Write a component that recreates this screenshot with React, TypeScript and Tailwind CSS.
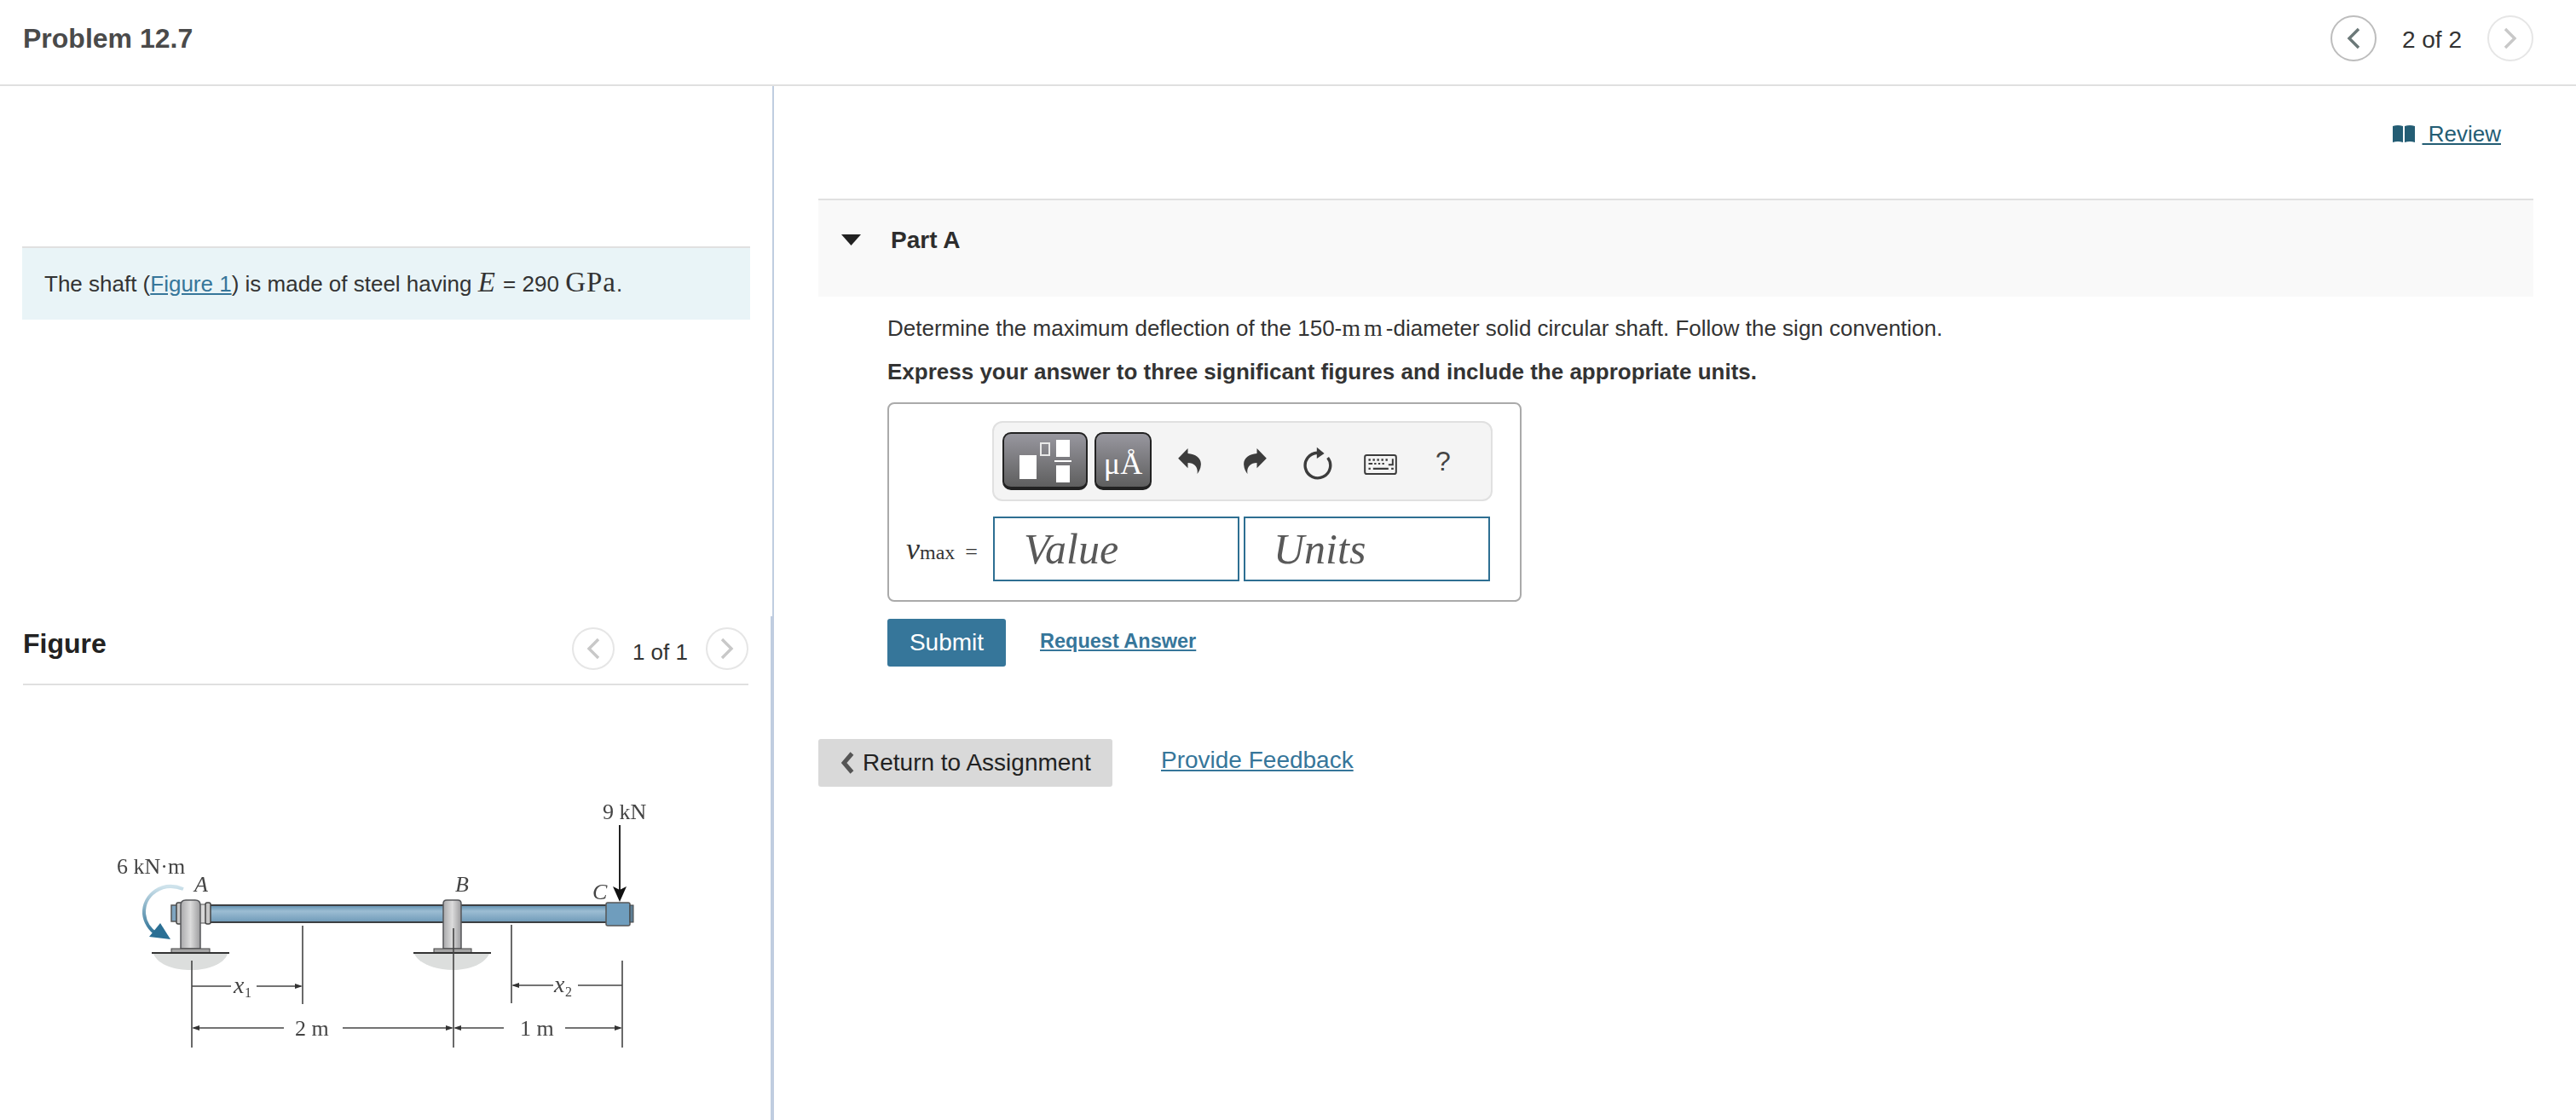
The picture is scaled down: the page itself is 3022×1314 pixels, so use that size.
import React from "react";

const NavButton = ({ dir, active, size }: { dir: "prev" | "next"; active?: boolean; size: string }) => (
  <button className={`${size} flex items-center justify-center rounded-full border-2 bg-white ${active ? "border-[#bdbdbd]" : "border-[#e6e6e6]"}`}>
    <svg width="16" height="26" viewBox="0 0 16 26" fill="none" stroke={active ? "#6b7878" : "#c8c8c8"} strokeWidth="3.4">
      {dir === "prev" ? <path d="M14 2 L3 13 L14 24" /> : <path d="M2 2 L13 13 L2 24" />}
    </svg>
  </button>
);

const Shaft = () => (
  <svg viewBox="0 880 900 434" className="block h-[434px] w-[900px] blur-[0.6px]">
    <defs>
      <linearGradient id="shaft" x1="0" y1="0" x2="0" y2="1">
        <stop offset="0" stopColor="#5f8fb0" />
        <stop offset="0.35" stopColor="#9cbdd3" />
        <stop offset="1" stopColor="#6f9ab8" />
      </linearGradient>
      <linearGradient id="post" x1="0" y1="0" x2="1" y2="0">
        <stop offset="0" stopColor="#a9a9ab" />
        <stop offset="0.5" stopColor="#dcdcdc" />
        <stop offset="1" stopColor="#9b9b9d" />
      </linearGradient>
      <linearGradient id="moment" x1="0" y1="0" x2="0" y2="1">
        <stop offset="0" stopColor="#cfe3ec" />
        <stop offset="1" stopColor="#2a6f94" />
      </linearGradient>
    </defs>

    {/* ground */}
    <path d="M180 1119 H267 C262 1133 240 1138 224 1138 C206 1138 186 1133 180 1119 Z" fill="#dcdedd" />
    <path d="M486 1119 H574 C568 1132 548 1138 532 1138 C514 1138 492 1132 486 1119 Z" fill="#dcdedd" />

    {/* shaft */}
    <rect x="245" y="1062" width="470" height="20" fill="url(#shaft)" stroke="#3c3f42" strokeWidth="2" />

    {/* support A */}
    <rect x="201" y="1062" width="12" height="19" fill="#7fa5c0" stroke="#555" strokeWidth="1.5" />
    <rect x="207" y="1059" width="7" height="25" rx="2" fill="#c8c8c8" stroke="#444" strokeWidth="1.5" />
    <rect x="234" y="1061" width="8" height="22" fill="#d8d8d8" stroke="#555" strokeWidth="1" />
    <rect x="241" y="1059" width="6" height="25" rx="2" fill="#c8c8c8" stroke="#444" strokeWidth="1.5" />
    <path d="M212 1113 V1062 Q212 1056 218 1056 H229 Q235 1056 235 1062 V1113 Z" fill="url(#post)" stroke="#55575a" strokeWidth="1.5" />
    <rect x="201" y="1113" width="45" height="5" fill="#a5a5a5" stroke="#444" strokeWidth="1" />
    <rect x="178" y="1117" width="91" height="2" fill="#333" />

    {/* support B */}
    <path d="M520 1113 V1060 Q520 1056 524 1056 H537 Q541 1056 541 1060 V1113 Z" fill="url(#post)" stroke="#55575a" strokeWidth="1.5" />
    <rect x="509" y="1113" width="44" height="5" fill="#a5a5a5" stroke="#444" strokeWidth="1" />
    <rect x="485" y="1117" width="91" height="2" fill="#333" />

    {/* end collar */}
    <rect x="711" y="1059" width="28" height="27" rx="2" fill="#6f9dbd" stroke="#555" strokeWidth="1.5" />
    <rect x="739" y="1062" width="4" height="20" fill="#5f7f95" stroke="#444" strokeWidth="1" />

    {/* moment */}
    <path d="M215 1043 C190 1033 168 1050 169 1072 C170 1082 176 1091 184 1096" fill="none" stroke="url(#moment)" strokeWidth="4" />
    <path d="M200 1102 L175 1099 L188 1083 Z" fill="#2a6f94" />

    {/* load */}
    <path d="M727 968 V1045" stroke="#222" strokeWidth="2" />
    <path d="M719 1040 L727 1058 L735 1040 L727 1044 Z" fill="#111" />

    {/* dimension lines */}
    <g stroke="#444" strokeWidth="1.6" fill="none">
      <path d="M225 1127 V1229" />
      <path d="M355 1086 V1178" />
      <path d="M532 1089 V1229" />
      <path d="M600 1085 V1177" />
      <path d="M730 1127 V1229" />
      <path d="M225 1157 H271" />
      <path d="M301 1157 H353" />
      <path d="M602 1156 H649" />
      <path d="M678 1156 H730" />
      <path d="M227 1206 H333" />
      <path d="M402 1206 H530" />
      <path d="M534 1206 H591" />
      <path d="M663 1206 H728" />
    </g>
    <g fill="#333">
      <path d="M355 1157 L346 1154 V1160 Z" />
      <path d="M600 1156 L609 1153 V1159 Z" />
      <path d="M225 1206 L234 1203 V1209 Z" />
      <path d="M532 1206 L523 1203 V1209 Z" />
      <path d="M532 1206 L541 1203 V1209 Z" />
      <path d="M730 1206 L721 1203 V1209 Z" />
    </g>

    <g fontFamily="'Liberation Serif', serif" fill="#444" fontSize="26">
      <text x="137" y="1025">6 kN·m</text>
      <text x="707" y="961">9 kN</text>
      <text x="346" y="1215">2 m</text>
      <text x="610" y="1215">1 m</text>
      <g fontStyle="italic" fontSize="26">
        <text x="228" y="1046">A</text>
        <text x="534" y="1046">B</text>
        <text x="695" y="1055">C</text>
        <text x="274" y="1165" fontSize="28">x</text>
        <text x="650" y="1164" fontSize="28">x</text>
      </g>
      <text x="287" y="1170" fontSize="16">1</text>
      <text x="663" y="1169" fontSize="16">2</text>
    </g>
  </svg>
);

const MathToolbar = () => (
  <div className="flex h-[94px] w-[587px] items-center rounded-[12px] border-2 border-[#e0e0e0] bg-[#f4f4f4] pl-[10px]">
    <button className="flex h-[68px] w-[100px] items-center justify-center rounded-[10px] border-2 border-b-4 border-[#222] bg-gradient-to-b from-[#98979f] to-[#5f5f5f]">
      <svg width="64" height="52" viewBox="0 0 64 52">
        <rect x="2" y="20" width="20" height="28" fill="#fff" />
        <rect x="27" y="6" width="10" height="14" fill="none" stroke="#e8e8e8" strokeWidth="2" />
        <rect x="45" y="2" width="16" height="20" fill="#fff" />
        <rect x="43" y="26" width="20" height="2" fill="#fff" />
        <rect x="45" y="32" width="16" height="20" fill="#fff" />
      </svg>
    </button>
    <button className="ml-2 flex h-[68px] w-[67px] items-center justify-center rounded-[10px] border-2 border-b-4 border-[#222] bg-gradient-to-b from-[#98979f] to-[#5f5f5f] font-['Liberation_Serif',serif] text-[36px] leading-none text-white">
      <span className="pt-2">μÅ</span>
    </button>
    <div className="flex w-[88px] justify-center">
      <svg width="27" height="30" viewBox="63 77 80 90" fill="#3c3c3c">
        <path d="M63 112 L97 77 L97 95 C125 97 145 112 143 135 C142 150 136 160 130 167 C134 145 122 128 97 128 L97 147 Z" />
      </svg>
    </div>
    <div className="flex w-[66px] justify-center">
      <svg width="27" height="30" viewBox="63 77 80 90" fill="#3c3c3c">
        <path transform="matrix(-1 0 0 1 206 0)" d="M63 112 L97 77 L97 95 C125 97 145 112 143 135 C142 150 136 160 130 167 C134 145 122 128 97 128 L97 147 Z" />
      </svg>
    </div>
    <div className="flex w-[80px] justify-center pt-1">
      <svg width="35" height="39" viewBox="500 65 104 115" fill="none">
        <path d="M588 103 A44 44 0 1 1 552 86" stroke="#3c3c3c" strokeWidth="10" />
        <path d="M550 67 L576 88 L550 106 Z" fill="#3c3c3c" />
      </svg>
    </div>
    <div className="flex w-[68px] justify-center pt-2">
      <svg width="39" height="24" viewBox="716 102 116 72" fill="#3c3c3c">
        <rect x="719" y="105" width="110" height="66" rx="7" fill="none" stroke="#3c3c3c" strokeWidth="6" />
        <path d="M732 118h7v7h-7zM747 118h7v7h-7zM762 118h7v7h-7zM777 118h7v7h-7zM792 118h7v7h-7zM814 118h6v24h-18v-6h12z" />
        <path d="M732 132h14v6h-14zM752 132h7v6h-7zM766 132h7v6h-7zM780 132h7v6h-7z" />
        <path d="M732 149h7v7h-7zM748 149h54v7h-54zM812 149h8v7h-8z" />
      </svg>
    </div>
    <div className="flex w-[80px] justify-center font-['Liberation_Sans',sans-serif] text-[32px] leading-none text-[#444]">?</div>
  </div>
);

export default function App() {
  return (
    <div className="h-[1314px] w-[3022px] overflow-hidden bg-white font-['Liberation_Sans',Arial,sans-serif] text-[26px] text-[#333]">
      {/* Top bar */}
      <header className="flex h-[101px] items-center justify-between border-b-2 border-[#e0e0e0] pl-[27px] pr-[50px]">
        <h1 className="mb-[10px] text-[32px] font-bold text-[#4a4a4a]">Problem 12.7</h1>
        <div className="mb-[10px] flex items-center">
          <NavButton dir="prev" active size="h-[54px] w-[54px]" />
          <span className="mx-[30px] mt-1 text-[28px]">2 of 2</span>
          <NavButton dir="next" size="h-[54px] w-[54px]" />
        </div>
      </header>

      <div className="flex">
        {/* Left column */}
        <aside className="flex w-[908px] flex-col">
          <div className="h-[622px] border-r-2 border-[#c0cde0] pl-[26px] pr-[26px] pt-[188px]">
            <div className="flex h-[86px] items-center border-t-2 border-[#e0e0e0] bg-[#e9f4f7] pb-[2px] pl-[26px] text-[26px]">
              <p>
                The shaft (<a className="text-[#36769a] underline">Figure 1</a>) is made of steel having{" "}
                <span className="mr-[2px] font-['Liberation_Serif',serif] text-[33px] italic">E</span> = 290{" "}
                <span className="font-['Liberation_Serif',serif] text-[33px] tracking-[1px]">GPa</span>.
              </p>
            </div>
          </div>
          <div className="h-[591px] border-r-4 border-[#c0cde0]">
            <div className="ml-[27px] mr-[26px] mt-[13px] flex h-[68px] items-center justify-between border-b-2 border-[#e0e0e0]">
              <h2 className="mb-[28px] text-[32px] font-bold text-[#222]">Figure</h2>
              <div className="mb-[16px] flex items-center">
                <NavButton dir="prev" size="h-[50px] w-[50px]" />
                <span className="mx-[21px] mt-2 text-[26px]">1 of 1</span>
                <NavButton dir="next" size="h-[50px] w-[50px]" />
              </div>
            </div>
            <div className="mt-[76px]">
              <Shaft />
            </div>
          </div>
        </aside>

        {/* Right column */}
        <main className="flex-1 pl-[52px] pr-[50px]">
          <div className="flex h-[132px] justify-end pr-[38px] pt-[41px]">
            <a className="flex h-[30px] items-center text-[26px] text-[#245d74]">
              <svg width="26" height="20" viewBox="0 0 26 20" fill="#245d74" className="mr-[9px]">
                <path d="M0 1 Q6 -1 12 1 V20 Q6 18 0 20 Z M14 1 Q20 -1 26 1 V20 Q20 18 14 20 Z" />
              </svg>
              <span className="whitespace-pre underline"> Review</span>
            </a>
          </div>

          <div className="flex h-[115px] items-start border-t-2 border-[#e0e0e0] bg-[#f9f9f9] pl-[27px] pt-[26px]">
            <svg width="23" height="13" viewBox="0 0 23 13" className="mt-[14px]">
              <path d="M0 0 H23 L11.5 13 Z" fill="#222" />
            </svg>
            <h3 className="ml-[35px] text-[28px] font-bold text-[#2d2d2d]">Part A</h3>
          </div>

          <div className="pl-[81px]">
            <p className="mt-[17px] leading-[39px]">
              Determine the maximum deflection of the 150-<span className="font-['Liberation_Serif',serif] text-[28px] tracking-[4px]">mm</span>-diameter solid circular shaft. Follow the sign convention.
            </p>
            <p className="mt-[12px] font-bold">Express your answer to three significant figures and include the appropriate units.</p>

            {/* Answer box */}
            <div className="mt-[16px] h-[234px] w-[744px] rounded-[8px] border-2 border-[#aaaaaa] pl-[121px] pt-[20px]">
              <MathToolbar />
              <div className="relative ml-px mt-[18px] flex gap-[5px]">
                <div className="absolute left-[-102px] top-[20px] flex items-baseline font-['Liberation_Serif',serif] text-[#333]">
                  <span className="text-[36px] italic leading-none">v</span>
                  <span className="text-[24px] leading-none">max</span>
                  <span className="ml-[12px] text-[26px] leading-none">=</span>
                </div>
                <div className="flex h-[76px] w-[289px] items-center border-2 border-[#2e6f92] pl-[34px] font-['Liberation_Serif',serif] text-[50px] italic text-[#595959]">Value</div>
                <div className="flex h-[76px] w-[289px] items-center border-2 border-[#2e6f92] pl-[33px] font-['Liberation_Serif',serif] text-[50px] italic text-[#595959]">Units</div>
              </div>
            </div>

            <div className="mt-[20px] flex items-center">
              <button className="h-[56px] w-[139px] rounded-[3px] bg-[#36769a] text-[28px] text-white">Submit</button>
              <a className="mb-[3px] ml-[40px] text-[23.5px] font-bold text-[#36769a] underline">Request Answer</a>
            </div>
          </div>

          <div className="ml-0 mt-[85px] flex items-start">
            <button className="flex h-[56px] w-[345px] items-center rounded-[3px] bg-[#d9d9d9] pl-[27px] text-[28px] text-[#222]">
              <svg width="15" height="26" viewBox="0 0 15 26" fill="none" stroke="#555" strokeWidth="5" className="mr-[10px]">
                <path d="M12.5 2 L3 13 L12.5 24" />
              </svg>
              Return to Assignment
            </button>
            <a className="ml-[57px] mt-[4px] text-[28px] text-[#36769a] underline">Provide Feedback</a>
          </div>
        </main>
      </div>
    </div>
  );
}
